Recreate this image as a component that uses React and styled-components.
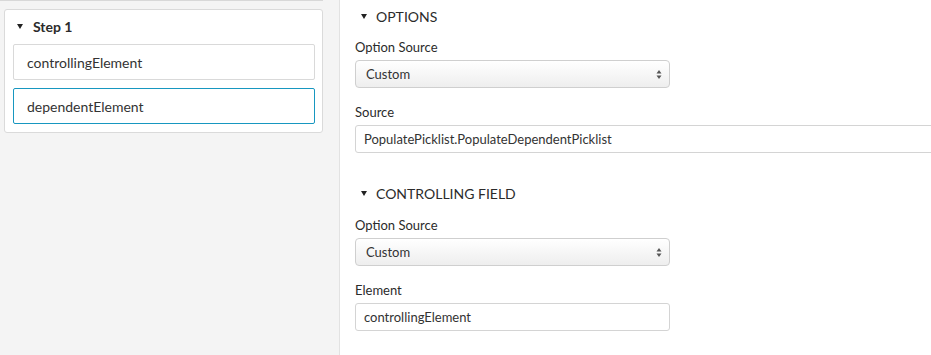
import React from 'react';
import styled, { createGlobalStyle } from 'styled-components';

const GlobalStyle = createGlobalStyle`
  html, body {
    margin: 0;
    padding: 0;
    background: #fff;
  }
  body {
    font-family: Lato, "Open Sans", Arial, sans-serif;
    color: #16325c;
  }
`;

const Page = styled.div`
  display: flex;
  width: 931px;
  height: 355px;
  overflow: hidden;
`;

const Sidebar = styled.div`
  width: 340px;
  flex-shrink: 0;
  background: #f4f4f4;
  border-right: 1px solid #e2e2e2;
  padding: 0 16px 0 4px;
  box-sizing: border-box;
  display: flex;
  flex-direction: column;
  gap: 8px;
`;

const CardTail = styled.div`
  height: 1px;
  background: #d8d8d8;
  margin-left: -4px;
`;

const Card = styled.div`
  background: #fff;
  border: 1px solid #dadada;
  border-radius: 3px;
  padding: 0 7px 8px 8px;
  display: flex;
  flex-direction: column;
  gap: 8px;
`;

const CardHeader = styled.div`
  height: 34px;
  display: flex;
  align-items: center;
  padding-left: 4px;
  padding-bottom: 1px;
  box-sizing: border-box;
  font-size: 14px;
  font-weight: 700;
  color: #2b2b2b;
  margin-bottom: -8px;
`;

const Caret = styled.span`
  display: inline-block;
  width: 0;
  height: 0;
  border-left: 3.5px solid transparent;
  border-right: 3.5px solid transparent;
  border-top: 5px solid #222;
  margin-right: ${p => p.$gap || 10}px;
`;

const Item = styled.div`
  height: 36px;
  box-sizing: border-box;
  border: 1px solid ${p => (p.$active ? '#1797c0' : '#d9d9d9')};
  border-radius: 2px;
  display: flex;
  align-items: center;
  padding-left: 13px;
  font-size: 14px;
  color: #333;
`;

const Main = styled.div`
  flex: 1;
  min-width: 0;
  padding-left: 15px;
  overflow: hidden;
  background: #fff;
`;

const SectionHeader = styled.div`
  height: 32px;
  display: flex;
  align-items: center;
  padding-left: 6px;
  font-size: 14px;
  color: #2b2b2b;
  text-transform: uppercase;
  margin-top: ${p => p.$top || 0}px;
`;

const Label = styled.div`
  margin-top: ${p => p.$top || 6}px;
  line-height: 18px;
  font-size: 13px;
  color: #2b2b2b;
`;

const Select = styled.div`
  margin-top: 4px;
  width: 315px;
  height: 28px;
  box-sizing: border-box;
  border: 1px solid #cfcfcf;
  border-radius: 4px;
  background: linear-gradient(#ffffff, #eeeeee);
  display: flex;
  align-items: center;
  justify-content: space-between;
  padding: 0 7px 0 10px;
  font-size: 13px;
  color: #333;
`;

const Input = styled.div`
  margin-top: 4px;
  width: ${p => (p.$wide ? 'calc(100% + 20px)' : '315px')};
  height: 28px;
  box-sizing: border-box;
  border: 1px solid #d4d4d4;
  border-radius: 3px;
  background: #fff;
  display: flex;
  align-items: center;
  padding-left: 8px;
  font-size: 13px;
  color: #333;
`;

const Stepper = () => (
  <svg width="6" height="11" viewBox="0 0 6 11">
    <path d="M3 1 L5.5 4.5 L0.5 4.5 Z" fill="#555" />
    <path d="M3 10 L5.5 6.5 L0.5 6.5 Z" fill="#555" />
  </svg>
);

const App = () => (
  <>
    <GlobalStyle />
    <Page>
      <Sidebar>
        <CardTail />
        <Card>
          <CardHeader>
            <Caret />
            Step 1
          </CardHeader>
          <Item>controllingElement</Item>
          <Item $active>dependentElement</Item>
        </Card>
      </Sidebar>
      <Main>
        <SectionHeader>
          <Caret $gap={9} />
          Options
        </SectionHeader>
        <Label>Option Source</Label>
        <Select>
          Custom
          <Stepper />
        </Select>
        <Label $top={15}>Source</Label>
        <Input $wide>PopulatePicklist.PopulateDependentPicklist</Input>
        <SectionHeader $top={24}>
          <Caret $gap={9} />
          Controlling Field
        </SectionHeader>
        <Label $top={7}>Option Source</Label>
        <Select>
          Custom
          <Stepper />
        </Select>
        <Label $top={15}>Element</Label>
        <Input>controllingElement</Input>
      </Main>
    </Page>
  </>
);

export default App;
